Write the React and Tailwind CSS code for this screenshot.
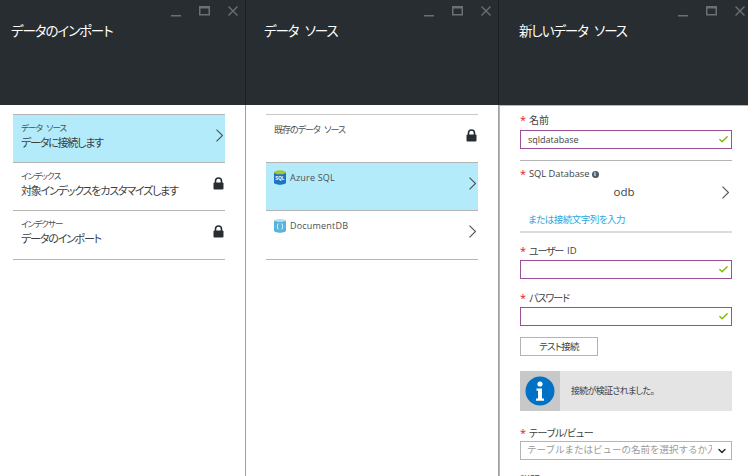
import React from 'react';
import { Check, ChevronDown } from 'lucide-react';

const jp = "font-['Open_Sans','Noto_Sans_CJK_JP',sans-serif]";

const Chevron = () => (
  <svg width="7" height="13" viewBox="0 0 7 13" fill="none" stroke="#4a5056" strokeWidth="1.1" className="mr-[1px]">
    <path d="M.5 .7l6 5.8-6 5.8" />
  </svg>
);

const LockIcon = () => (
  <svg width="11" height="13" viewBox="0 0 11 13">
    <path d="M2.5 6V4a3 3 0 0 1 6 0v2" fill="none" stroke="#282d32" strokeWidth="1.6" />
    <rect x="0.5" y="5.5" width="10" height="7" rx="1" fill="#282d32" />
  </svg>
);

const WindowButtons = ({ pr }) => (
  <div className={`flex justify-end items-start gap-[18px] pt-[6px] h-[20px] ${pr}`}>
    <svg width="10" height="12" viewBox="0 0 10 12"><rect x="0" y="9" width="10" height="1.5" fill="#6b7075" /></svg>
    <svg width="11" height="10" viewBox="0 0 11 10"><rect x="0.75" y="0.75" width="9.5" height="8" fill="none" stroke="#6b7075" strokeWidth="1.5" /><rect x="0" y="0" width="11" height="2.5" fill="#6b7075" /></svg>
    <svg width="10" height="10" viewBox="0 0 10 10" stroke="#6b7075" strokeWidth="1.4"><path d="M0.5 0.5l9 9M9.5 0.5l-9 9" /></svg>
  </div>
);

const Header = ({ title, pl, pr, edge = 'border-r border-[#1c2024]' }) => (
  <header className={`h-[105px] bg-[#282d32] shrink-0 ${edge}`}>
    <WindowButtons pr={pr} />
    <h1 className={`${pl} mt-[2px] text-[13.5px] leading-[18px] tracking-[-1.1px] [word-spacing:4px] text-white [font-feature-settings:'palt'] whitespace-pre`}>{title}</h1>
  </header>
);

const StepRow = ({ small, big, active, icon, h = 'h-[48px]' }) => (
  <div className={`${h} border-b border-[#b4b4b4] flex items-start justify-between pl-[8px] pr-[1px] ${active ? 'bg-[#b3ebfb]' : ''}`}>
    <div className="pt-[7px] [font-feature-settings:'palt']">
      <p className="text-[8.5px] leading-[12px] tracking-[-0.9px] [word-spacing:3px] text-[#4a5056]">{small}</p>
      <p className="text-[11px] leading-[16px] tracking-[-1.2px] text-[#3a3f44] mt-[1px]">{big}</p>
    </div>
    <div className="pt-[14px]">{icon}</div>
  </div>
);

const SqlIcon = () => (
  <svg width="12" height="15" viewBox="0 0 12 15">
    <path d="M0 2.5v10c0 1.3 2.7 2.2 6 2.2s6-.9 6-2.2v-10z" fill="#1f73c4" />
    <ellipse cx="6" cy="2.3" rx="6" ry="2" fill="#a4c92e" />
    <text x="6" y="10" textAnchor="middle" fontSize="4.5" fontWeight="700" fill="#fff" fontFamily="'Liberation Sans',sans-serif">SQL</text>
  </svg>
);

const DocIcon = () => (
  <svg width="12" height="15" viewBox="0 0 12 15">
    <path d="M0 2.5v10c0 1.3 2.7 2.2 6 2.2s6-.9 6-2.2v-10z" fill="#59b4d9" />
    <ellipse cx="6" cy="2.3" rx="5" ry="1.5" fill="#b9e3f2" />
    <path d="M4.5 5.5c-1.2 0-.6 3-1.2 3 .6 0 0 3 1.2 3M7.5 5.5c1.2 0 .6 3 1.2 3-.6 0 0 3-1.2 3" fill="none" stroke="#fff" strokeWidth=".8" />
  </svg>
);

const SourceRow = ({ icon, label, active, right, h = 'h-[48px]', track = 'tracking-[0.2px]' }) => (
  <div className={`${h} border-b border-[#b4b4b4] flex justify-between pl-[8px] pr-[1px] ${active ? 'bg-[#b3ebfb]' : ''}`}>
    <div className="flex items-start gap-[4px] pt-[7px]">
      {icon}
      <span className={`text-[9px] leading-[14px] text-[#4a5056] mt-[1px] [font-feature-settings:'palt'] ${track}`}>{label}</span>
    </div>
    <div className="pt-[14px]">{right}</div>
  </div>
);

const Label = ({ children }) => (
  <div className="flex items-center h-[14px] text-[10px] text-[#3a3f44] [font-feature-settings:'palt']">
    <span className="text-[#e81123] text-[11px] w-[9px] leading-[14px]">*</span>
    {children}
  </div>
);

const TextInput = ({ value, mt = 'mt-[3px]' }) => (
  <div className={`${mt} h-[19px] border border-[#9b4f96] flex items-center justify-between pl-[7px] pr-[2px] text-[9px] text-[#3a3f44]`}>
    <span>{value}</span>
    <Check size={11} strokeWidth={3} className="text-[#7fba00]" />
  </div>
);

export default function App() {
  return (
    <div className={`${jp} w-[748px] h-[476px] overflow-hidden flex bg-white`}>
      {/* パネル 1 */}
      <section className="w-[246px] shrink-0 flex flex-col">
        <Header title="データのインポート" pl="pl-[11px]" pr="pr-[7px]" />
        <div className="flex-1 border-r border-[#a0a0a0] pt-[9px] pl-[13px] pr-[20px]">
          <div className="border-t border-[#b4b4b4]">
            <StepRow active small="データ ソース" big="データに接続します" icon={<Chevron />} />
            <StepRow small="インデックス" big="対象インデックスをカスタマイズします" icon={<LockIcon />} />
            <StepRow h="h-[49px]" small="インデクサー" big="データのインポート" icon={<LockIcon />} />
          </div>
        </div>
      </section>

      {/* パネル 2 */}
      <section className="w-[253px] shrink-0 flex flex-col">
        <Header title="データ ソース" pl="pl-[18px]" pr="pr-[7px]" />
        <div className="flex-1 border-r border-[#a0a0a0] pt-[9px] pl-[20px] pr-[20px]">
          <div className="border-t border-[#c8c8c8]">
            <SourceRow label="既存のデータ ソース" track="tracking-[-1px] [word-spacing:3px]" right={<LockIcon />} />
            <SourceRow active icon={<SqlIcon />} label="Azure SQL" right={<Chevron />} />
            <SourceRow h="h-[49px]" icon={<DocIcon />} label="DocumentDB" right={<Chevron />} />
          </div>
        </div>
      </section>

      {/* パネル 3 */}
      <section className="flex-1 flex flex-col min-w-0">
        <Header title="新しいデータ ソース" pl="pl-[20px]" pr="pr-[3px]" edge="" />
        <div className="flex-1 border-l border-t border-[#9db9e8] pl-[20px] pr-[16px] pt-[7px] flex flex-col">
          <Label>名前</Label>
          <TextInput value="sqldatabase" />
          <div className="border-b border-[#b4b4b4] mt-[11px]" />
          <div className="mt-[6px]">
            <Label>
              <span className="text-[9.3px]">SQL Database</span>
              <span className="ml-[2px] w-[7px] h-[7px] rounded-full bg-[#55595e] text-white text-[6px] leading-[7px] text-center font-bold">i</span>
            </Label>
          </div>
          <div className="flex items-center h-[18px] mt-[2px] pr-[2px]">
            <span className="flex-1 text-center text-[11.5px] text-[#3a3f44] pl-[6px]">odb</span>
            <Chevron />
          </div>
          <a className="ml-[8px] text-[9.5px] leading-[14px] tracking-[-0.5px] text-[#2aa6df] mt-[12px] [font-feature-settings:'palt']">または接続文字列を入力</a>
          <div className="border-b-2 border-[#dcdcdc] mt-[4px]" />
          <div className="mt-[11px]">
            <Label>
              <span className="tracking-[-1.2px]">ユーザー</span>
              <span className="ml-[4px] text-[9.5px]">ID</span>
            </Label>
          </div>
          <TextInput value="" mt="mt-[2px]" />
          <div className="mt-[12px]"><Label><span className="tracking-[-1px]">パスワード</span></Label></div>
          <TextInput value="" mt="mt-[2px]" />
          <button className="mt-[11px] w-[78px] h-[19px] border border-[#b4b4b4] text-[9.5px] tracking-[-0.8px] text-[#3a3f44] leading-none [font-feature-settings:'palt']">テスト接続</button>
          <div className="mt-[15px] h-[40px] shrink-0 bg-[#e4e4e4] flex items-center">
            <div className="w-[40px] h-[40px] bg-[#c8c8c8] flex items-center justify-center">
              <svg width="30" height="30" viewBox="0 0 30 30">
                <circle cx="15" cy="15" r="14.5" fill="#0072c6" />
                <circle cx="15" cy="8" r="2.6" fill="#fff" />
                <path d="M11.5 12.5h5.5v10h2v2.2h-8v-2.2h2v-7.8h-1.5z" fill="#fff" />
              </svg>
            </div>
            <span className="ml-[11px] text-[9px] tracking-[-0.7px] text-[#3a3f44] [font-feature-settings:'palt']">接続が検証されました。</span>
          </div>
          <div className="mt-[15px]">
            <Label><span className="tracking-[-0.4px]">テーブル/ビュー</span></Label>
          </div>
          <div className="mt-[1px] h-[19px] shrink-0 border border-[#b4b4b4] flex items-center pl-[6px] pr-[3px] text-[9.5px] text-[#9a9a9a]">
            <span className="flex-1 overflow-hidden whitespace-nowrap">テーブルまたはビューの名前を選択するか入力</span>
            <ChevronDown size={12} strokeWidth={3} className="text-[#282d32] ml-[4px] shrink-0" />
          </div>
          <div className="mt-[13px] text-[10px] leading-[14px] text-[#3a3f44] shrink-0">説明</div>
        </div>
      </section>
    </div>
  );
}
